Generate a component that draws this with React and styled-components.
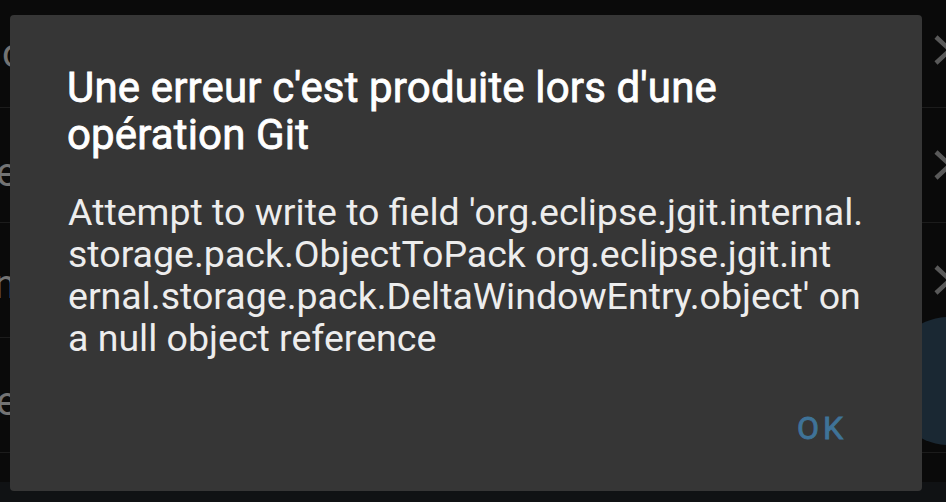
import React from "react";
import styled, { createGlobalStyle } from "styled-components";

const Global = createGlobalStyle`
  html, body { margin: 0; padding: 0; background: #0a0a0a; }
  body { font-family: Roboto, "Noto Sans", sans-serif; }
  #root { width: 946px; height: 502px; }
`;

const Screen = styled.div`
  position: relative;
  width: 946px;
  height: 502px;
  overflow: hidden;
  background: #0a0a0a;
  display: flex;
  flex-direction: column;
`;

const List = styled.div`
  display: flex;
  flex-direction: column;
  margin-top: -7px;
`;

const Row = styled.div`
  height: 114px;
  border-bottom: 1px solid #1c1c1c;
  display: flex;
  align-items: center;
  justify-content: space-between;
`;

const RowLabel = styled.span`
  font-size: 40px;
  color: #737373;
  margin-left: ${(p) => p.$shift}px;
  padding-top: ${(p) => p.$drop}px;
`;

const Chevron = styled.svg`
  width: 28px;
  height: 30px;
  margin-right: -14px;
  flex: none;
`;

const Spacer = styled.div`
  height: 29px;
`;

const BottomBar = styled.div`
  flex: 1;
  background: #101214;
`;

const Fab = styled.div`
  position: absolute;
  left: 886px;
  top: 317px;
  width: 128px;
  height: 128px;
  border-radius: 50%;
  background: #1a2833;
`;

const Dialog = styled.div`
  position: absolute;
  left: 10px;
  top: 15px;
  width: 912px;
  height: 476px;
  box-sizing: border-box;
  background: #363636;
  border-radius: 4px;
  display: flex;
  flex-direction: column;
  padding: 49px 30px 0 57px;
`;

const Title = styled.h2`
  margin: 0;
  font-family: Roboto, sans-serif;
  font-weight: 400;
  -webkit-text-stroke: 0.8px #ffffff;
  letter-spacing: 0.15px;
  font-size: 42px;
  line-height: 47px;
  color: #ffffff;
`;

const Message = styled.p`
  margin: 33px 0 0 1px;
  font-family: Roboto, sans-serif;
  font-weight: 400;
  font-size: 37.5px;
  line-height: 42px;
  color: #ededed;
`;

const Actions = styled.div`
  margin-top: auto;
  display: flex;
  justify-content: flex-end;
  padding: 0 45px 44px 0;
`;

const OkButton = styled.button`
  border: none;
  background: transparent;
  padding: 0;
  font-family: Roboto, sans-serif;
  font-weight: 400;
  -webkit-text-stroke: 0.9px #3f7398;
  font-size: 32px;
  letter-spacing: 4px;
  color: #3f7398;
  line-height: 38px;
  cursor: pointer;
`;

const rows = [
  { label: "o", shift: 2, drop: 6 },
  { label: "e", shift: -4, drop: 14 },
  { label: "n", shift: -6, drop: 8 },
  { label: "e", shift: -4, drop: 12 },
];

function ChevronIcon() {
  return (
    <Chevron viewBox="0 0 28 30">
      <path d="M4 2 L18 15 L4 28" fill="none" stroke="#595959" strokeWidth="4.5" />
    </Chevron>
  );
}

export default function App() {
  return (
    <>
      <Global />
      <Screen>
        <List>
          {rows.map((r, i) => (
            <Row key={i}>
              <RowLabel $shift={r.shift} $drop={r.drop}>{r.label}</RowLabel>
              {i < 3 ? <ChevronIcon /> : <span />}
            </Row>
          ))}
        </List>
        <Spacer />
        <BottomBar />
        <Fab />
        <Dialog role="dialog">
          <Title>
            Une erreur c'est produite lors d'une
            <br />
            opération Git
          </Title>
          <Message>
            Attempt to write to field 'org.eclipse.jgit.internal.
            <br />
            storage.pack.ObjectToPack org.eclipse.jgit.int
            <br />
            ernal.storage.pack.DeltaWindowEntry.object' on
            <br />
            a null object reference
          </Message>
          <Actions>
            <OkButton>OK</OkButton>
          </Actions>
        </Dialog>
      </Screen>
    </>
  );
}
